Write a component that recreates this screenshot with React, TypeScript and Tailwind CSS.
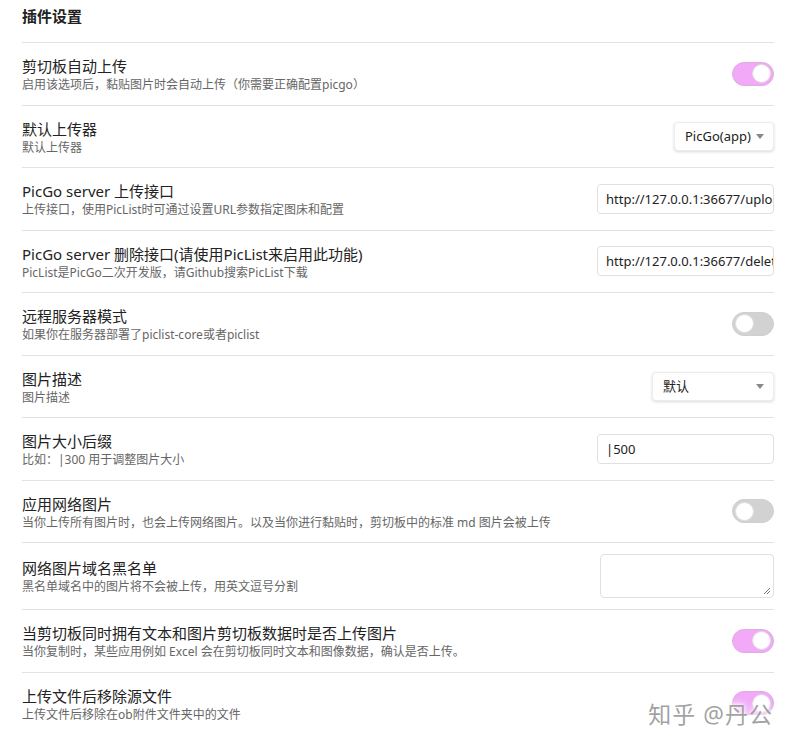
import React from "react";

const font = { fontFamily: '"Noto Sans", "Noto Sans CJK SC", sans-serif' };

function Toggle({ on }: { on: boolean }) {
  return on ? (
    <div className="relative w-[42px] h-[24px] rounded-full bg-[#f2aaf8] border border-[#dcaee0] flex items-center justify-end pr-[2px]">
      <div className="w-[19px] h-[19px] rounded-full bg-white border border-[#e7d4e8]" />
    </div>
  ) : (
    <div className="relative w-[42px] h-[24px] rounded-full bg-[#d2d2d2] border border-[#cfcfcf] flex items-center justify-start pl-[2px]">
      <div className="w-[19px] h-[19px] rounded-full bg-white border border-[#e0e0e0]" />
    </div>
  );
}

function Select({ value, w }: { value: string; w: string }) {
  return (
    <div
      className={`${w} h-[29px] rounded-[4px] bg-white border border-[#ececec] shadow-[0_1px_3px_rgba(0,0,0,0.15)] flex items-center justify-between pl-[10px] pr-[9px] text-[13px] text-[#222]`}
    >
      <span>{value}</span>
      <svg width="8" height="5" viewBox="0 0 8 5">
        <path d="M0 0 L8 0 L4 5 Z" fill="#888" />
      </svg>
    </div>
  );
}

function Input({ value }: { value: string }) {
  return (
    <input
      readOnly
      value={value}
      className="w-[177px] h-[30px] rounded-[4px] bg-white border border-[#e0e0e0] pl-[8px] pr-0 text-[13px] text-[#222] outline-none"
      style={font}
    />
  );
}

function Row({
  title,
  desc,
  control,
  last,
  tight,
}: {
  title: string;
  desc: string;
  control: React.ReactNode;
  last?: boolean;
  tight?: boolean;
}) {
  return (
    <div
      className={`flex items-center justify-between ${tight ? "py-[11px]" : "py-[12px]"} ${
        last ? "" : "border-b border-[#e3e3e3]"
      }`}
    >
      <div className="flex flex-col">
        <div className="text-[15px] leading-[22px] text-[#222]">{title}</div>
        <div className="text-[12px] leading-[15.5px] text-[#666]">{desc}</div>
      </div>
      <div className="shrink-0">{control}</div>
    </div>
  );
}

export default function App() {
  return (
    <div className="relative w-[791px] h-[744px] bg-white overflow-hidden" style={font}>
      <div className="pl-[22px] pr-[17px]">
        <div className="h-[43px] flex items-center border-b border-[#e3e3e3]">
          <div className="text-[15px] font-bold text-[#222] -mt-[9px]">插件设置</div>
        </div>
        <Row title="剪切板自动上传" desc="启用该选项后，黏贴图片时会自动上传（你需要正确配置picgo）" control={<Toggle on />} />
        <Row title="默认上传器" desc="默认上传器" control={<Select value="PicGo(app)" w="w-[100px]" />} />
        <Row
          title="PicGo server 上传接口"
          desc="上传接口，使用PicList时可通过设置URL参数指定图床和配置"
          control={<Input value="http://127.0.0.1:36677/upload" />}
        />
        <Row
          title="PicGo server 删除接口(请使用PicList来启用此功能)"
          desc="PicList是PicGo二次开发版，请Github搜索PicList下载"
          control={<Input value="http://127.0.0.1:36677/delete" />}
        />
        <Row title="远程服务器模式" desc="如果你在服务器部署了piclist-core或者piclist" control={<Toggle on={false} />} />
        <Row title="图片描述" desc="图片描述" control={<Select value="默认" w="w-[122px]" />} />
        <Row title="图片大小后缀" desc="比如：|300 用于调整图片大小" control={<Input value="|500" />} />
        <Row
          title="应用网络图片"
          desc="当你上传所有图片时，也会上传网络图片。以及当你进行黏贴时，剪切板中的标准 md 图片会被上传"
          control={<Toggle on={false} />}
        />
        <Row
          title="网络图片域名黑名单"
          desc="黑名单域名中的图片将不会被上传，用英文逗号分割"
          tight
          control={
            <div className="relative w-[174px] h-[44px] rounded-[4px] bg-white border border-[#e0e0e0]">
              <svg className="absolute right-[2px] bottom-[2px]" width="8" height="8" viewBox="0 0 8 8">
                <path d="M7 1 L1 7 M7 4 L4 7" stroke="#777" strokeWidth="1" />
              </svg>
            </div>
          }
        />
        <Row
          title="当剪切板同时拥有文本和图片剪切板数据时是否上传图片"
          desc="当你复制时，某些应用例如 Excel 会在剪切板同时文本和图像数据，确认是否上传。"
          control={<Toggle on />}
        />
        <Row title="上传文件后移除源文件" desc="上传文件后移除在ob附件文件夹中的文件" control={<Toggle on />} last />
      </div>
      <div
        className="absolute right-[18px] bottom-[13px] text-[23px] text-[#8a8a8a]/80 tracking-[1px]"
        style={{ textShadow: "0 0 3px #fff, 0 0 6px #fff, 0 0 8px #fff" }}
      >
        知乎 @丹公
      </div>
    </div>
  );
}
